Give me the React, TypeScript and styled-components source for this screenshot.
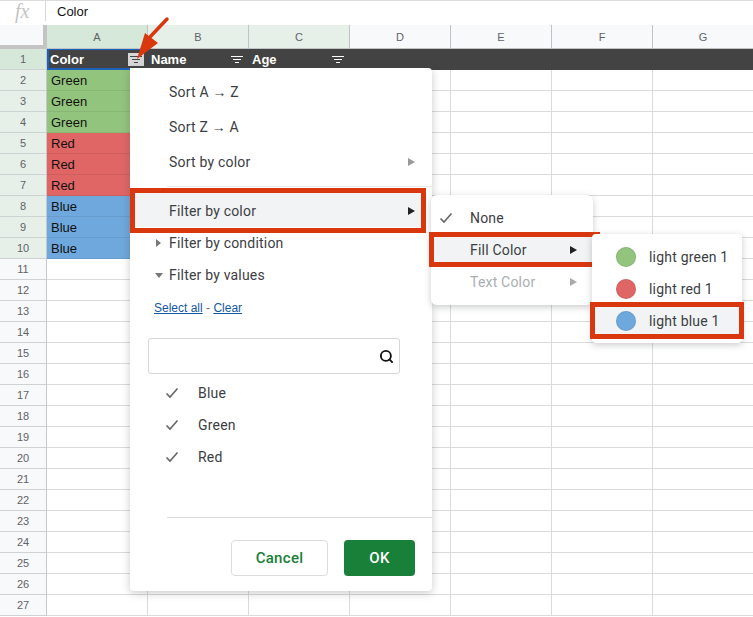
import styled, { createGlobalStyle } from "styled-components";
import { Search } from "lucide-react";

const rows = Array.from({ length: 27 }, (_, i) => i + 1);
const columns = ["A", "B", "C", "D", "E", "F", "G"];

const colors = {
  green: "#93c47d",
  red: "#e06666",
  blue: "#6fa8dc",
  line: "#dadada",
  mark: "#d9380f",
  text: "#3c4043",
};

const cellData: { label: string; fill: string }[] = [
  { label: "Green", fill: colors.green },
  { label: "Green", fill: colors.green },
  { label: "Green", fill: colors.green },
  { label: "Red", fill: colors.red },
  { label: "Red", fill: colors.red },
  { label: "Red", fill: colors.red },
  { label: "Blue", fill: colors.blue },
  { label: "Blue", fill: colors.blue },
  { label: "Blue", fill: colors.blue },
];

const GlobalStyle = createGlobalStyle`
  html, body {
    margin: 0;
    padding: 0;
    background: #fff;
    overflow: hidden;
  }
  body {
    font-family: "Liberation Sans", Arial, sans-serif;
  }
`;

const Page = styled.div`
  position: relative;
  width: 753px;
  height: 617px;
  overflow: hidden;
`;

const FormulaBar = styled.div`
  height: 25px;
  box-sizing: border-box;
  padding-bottom: 4px;
  display: flex;
  align-items: center;
  border-top: 1px solid #dcdcdc;
`;

const FxLabel = styled.span`
  width: 46px;
  box-sizing: border-box;
  padding-left: 15px;
  font-family: "Liberation Serif", serif;
  font-style: italic;
  font-size: 20px;
  line-height: 20px;
  color: #c4c4c4;
  border-right: 1px solid #d8d8d8;
`;

const FormulaText = styled.span`
  margin-left: 11px;
  font-size: 13px;
  color: #111;
`;

const Sheet = styled.div`
  display: grid;
  grid-template-columns: 47px repeat(7, 101px);
  grid-template-rows: 24px 21px;
  grid-auto-rows: 21px;
`;

const Corner = styled.div`
  background: #f8f9fa;
  border-right: 4px solid #c4c4c4;
  border-bottom: 4px solid #c4c4c4;
`;

const ColumnHead = styled.div<{ $tone: "active" | "used" | "plain" }>`
  display: flex;
  align-items: center;
  justify-content: center;
  font-size: 11px;
  color: #5f6368;
  border-right: 1px solid #bfc3c6;
  border-bottom: 1px solid #bfc3c6;
  background: ${(p) =>
    p.$tone === "active" ? "#d5e8da" : p.$tone === "used" ? "#e6efe8" : "#f8f9fa"};
`;

const RowHead = styled.div<{ $tone: "active" | "used" | "plain" }>`
  display: flex;
  align-items: center;
  justify-content: center;
  font-size: 11px;
  color: #5f6368;
  border-right: 1px solid #c4c8ca;
  border-bottom: 1px solid #cfd2d2;
  background: ${(p) =>
    p.$tone === "active" ? "#d5e8da" : p.$tone === "used" ? "#e6efe8" : "#f8f9fa"};
`;

const Cell = styled.div<{ $fill?: string }>`
  display: flex;
  align-items: center;
  box-sizing: border-box;
  padding-left: 4px;
  font-size: 13px;
  color: #111;
  background: ${(p) => p.$fill ?? "#fff"};
  border-right: 1px solid ${(p) => p.$fill ?? colors.line};
  border-bottom: 1px solid ${(p) => (p.$fill ? "rgba(0,0,0,0.07)" : colors.line)};
`;

const HeaderCell = styled.div<{ $selected?: boolean }>`
  display: flex;
  align-items: center;
  justify-content: space-between;
  box-sizing: border-box;
  padding: 0 4px 0 ${(p) => (p.$selected ? "1px" : "3px")};
  font-size: 13px;
  font-weight: 700;
  color: #fff;
  background: #434343;
  border: ${(p) => (p.$selected ? "2px solid #1c62b9" : "none")};
  border-right: none;
  border-top-width: ${(p) => (p.$selected ? "1px" : "0")};
`;

const FilterButton = styled.span<{ $active?: boolean }>`
  width: 16px;
  height: 13px;
  display: flex;
  align-items: center;
  justify-content: center;
  background: ${(p) => (p.$active ? "#d6d6d6" : "transparent")};
  color: ${(p) => (p.$active ? "#444" : "#fff")};
`;

const Menu = styled.div`
  position: absolute;
  left: 130px;
  top: 68px;
  width: 302px;
  height: 523px;
  display: flex;
  flex-direction: column;
  background: #fff;
  border-radius: 0 4px 4px 4px;
  box-shadow: 0 2px 8px rgba(60, 64, 67, 0.28);
  font-family: Roboto, sans-serif;
  font-size: 14px;
  letter-spacing: 0.2px;
  color: ${colors.text};
`;

const SortGroup = styled.div`
  padding-top: 6px;
  padding-bottom: 7px;
`;

const SortRow = styled.div`
  height: 35px;
  display: flex;
  align-items: center;
  justify-content: space-between;
  padding: 0 17px 0 39px;
`;

const SortRule = styled.div`
  margin-left: 37px;
  border-top: 1px solid #e8eaed;
`;

const MarkedRow = styled.div`
  position: relative;
  height: 34px;
  box-sizing: border-box;
  margin: 6px 6px 0 0;
  display: flex;
  align-items: center;
  justify-content: space-between;
  padding: 1px 11px 0 39px;
  background: #f1f3f4;
  color: #3c4043;
`;

const RedFrame = styled.span<{ $inset: string }>`
  position: absolute;
  inset: ${(p) => p.$inset};
  border: 5px solid ${colors.mark};
  pointer-events: none;
`;

const Arrow = styled.span<{ $color?: string }>`
  width: 0;
  height: 0;
  border-left: 7px solid ${(p) => p.$color ?? "#222"};
  border-top: 4px solid transparent;
  border-bottom: 4px solid transparent;
`;

const ToggleRow = styled.div`
  height: 32px;
  display: flex;
  align-items: center;
  padding-left: 26px;
  gap: 8px;
`;

const CaretRight = styled.span`
  width: 0;
  height: 0;
  border-left: 5px solid #777;
  border-top: 4px solid transparent;
  border-bottom: 4px solid transparent;
`;

const CaretDown = styled.span`
  width: 0;
  height: 0;
  margin: 0 -2px 0 -1px;
  border-top: 5px solid #777;
  border-left: 4px solid transparent;
  border-right: 4px solid transparent;
`;

const Links = styled.div`
  margin: 10px 0 0 24px;
  font-family: "Liberation Sans", sans-serif;
  font-size: 12px;
  line-height: 14px;
  letter-spacing: 0;
  color: #5f6368;
`;

const TextLink = styled.a`
  color: #15589f;
  text-decoration: underline;
`;

const SearchBox = styled.div`
  margin: 23px 0 0 18px;
  width: 252px;
  height: 36px;
  box-sizing: border-box;
  display: flex;
  align-items: center;
  justify-content: flex-end;
  padding-right: 5px;
  border: 1px solid #d4d6d8;
  border-radius: 3px;
  color: #111;
`;

const ValueList = styled.div`
  margin-top: 3px;
  display: flex;
  flex-direction: column;
`;

const ValueRow = styled.div`
  height: 32px;
  display: flex;
  align-items: center;
  padding-left: 35px;
  gap: 19px;
`;

const FooterLine = styled.div`
  margin: 44px 0 0 37px;
  border-top: 1px solid #dadce0;
`;

const Footer = styled.div`
  margin-top: 22px;
  padding-right: 17px;
  display: flex;
  justify-content: flex-end;
  gap: 16px;
`;

const CancelButton = styled.button`
  width: 97px;
  height: 36px;
  background: #fff;
  border: 1px solid #dadce0;
  border-radius: 4px;
  font-family: Roboto, sans-serif;
  font-size: 15px;
  font-weight: 500;
  letter-spacing: 0.3px;
  color: #188038;
`;

const OkButton = styled.button`
  width: 71px;
  height: 36px;
  background: #188038;
  border: none;
  border-radius: 4px;
  font-family: Roboto, sans-serif;
  font-size: 15px;
  font-weight: 500;
  letter-spacing: 0.3px;
  color: #fff;
`;

const SubMenu = styled.div`
  position: absolute;
  left: 431px;
  top: 195px;
  width: 162px;
  height: 110px;
  box-sizing: border-box;
  padding-top: 7px;
  background: #fff;
  border-radius: 6px;
  box-shadow: 0 2px 7px rgba(60, 64, 67, 0.28);
  font-family: Roboto, sans-serif;
  font-size: 14px;
  letter-spacing: 0.2px;
  color: ${colors.text};
`;

const SubRow = styled.div<{ $muted?: boolean; $active?: boolean }>`
  position: relative;
  height: 32px;
  display: flex;
  align-items: center;
  padding: 0 16px 0 8px;
  background: ${(p) => (p.$active ? "#f1f3f4" : "transparent")};
  color: ${(p) => (p.$muted ? "#aaaeb2" : "inherit")};
`;

const CheckSlot = styled.span`
  width: 31px;
  display: flex;
  align-items: center;
`;

const Grow = styled.span`
  flex: 1;
`;

const ColorMenu = styled(SubMenu)`
  left: 592px;
  top: 234px;
  width: 150px;
  height: 109px;
  border-radius: 4px;
`;

const ColorRow = styled.div<{ $active?: boolean }>`
  position: relative;
  height: 32px;
  display: flex;
  align-items: center;
  gap: 13px;
  padding-left: 24px;
  background: ${(p) => (p.$active ? "#f1f3f4" : "transparent")};
`;

const Swatch = styled.span<{ $fill: string }>`
  width: 20px;
  height: 20px;
  border-radius: 50%;
  background: ${(p) => p.$fill};
  box-shadow: inset 0 0 0 1px rgba(0, 0, 0, 0.08);
`;

const Pointer = styled.svg`
  position: absolute;
  left: 130px;
  top: 14px;
  width: 42px;
  height: 50px;
`;

function FilterIcon() {
  return (
    <svg width="12" height="9" viewBox="0 0 12 9" fill="none" stroke="currentColor" strokeWidth="1">
      <path d="M0 1.5h12M2 4.5h8M4 7.5h4" />
    </svg>
  );
}

function CheckIcon() {
  return (
    <svg width="14" height="12" viewBox="0 0 14 12" fill="none" stroke="#666" strokeWidth="1.6">
      <path d="M1.5 6.5l3.5 3.6L12.5 1.5" />
    </svg>
  );
}

function headerTone(col: string): "active" | "used" | "plain" {
  if (col === "A") return "active";
  return col === "B" || col === "C" ? "used" : "plain";
}

function rowTone(row: number): "active" | "used" | "plain" {
  if (row === 1) return "active";
  return row <= 10 ? "used" : "plain";
}

export default function App() {
  return (
    <Page>
      <GlobalStyle />
      <FormulaBar>
        <FxLabel>fx</FxLabel>
        <FormulaText>Color</FormulaText>
      </FormulaBar>
      <Sheet>
        <Corner />
        {columns.map((col) => (
          <ColumnHead key={col} $tone={headerTone(col)}>
            {col}
          </ColumnHead>
        ))}
        {rows.map((row) => (
          <Row key={row} row={row} />
        ))}
      </Sheet>

      <Menu>
        <SortGroup>
          <SortRow>Sort A → Z</SortRow>
          <SortRow>Sort Z → A</SortRow>
          <SortRow>
            Sort by color
            <Arrow $color="#999" />
          </SortRow>
        </SortGroup>
        <SortRule />
        <MarkedRow>
          Filter by color
          <Arrow />
          <RedFrame $inset="-5px 0 -6px 0" />
        </MarkedRow>
        <ToggleRow>
          <CaretRight />
          Filter by condition
        </ToggleRow>
        <ToggleRow>
          <CaretDown />
          Filter by values
        </ToggleRow>
        <Links>
          <TextLink>Select all</TextLink> - <TextLink>Clear</TextLink>
        </Links>
        <SearchBox>
          <Search size={15} strokeWidth={3} />
        </SearchBox>
        <ValueList>
          {["Blue", "Green", "Red"].map((v) => (
            <ValueRow key={v}>
              <CheckIcon />
              {v}
            </ValueRow>
          ))}
        </ValueList>
        <FooterLine />
        <Footer>
          <CancelButton>Cancel</CancelButton>
          <OkButton>OK</OkButton>
        </Footer>
      </Menu>

      <SubMenu>
        <SubRow>
          <CheckSlot>
            <CheckIcon />
          </CheckSlot>
          None
        </SubRow>
        <SubRow $active>
          <CheckSlot />
          <Grow>Fill Color</Grow>
          <Arrow />
          <RedFrame $inset="-2px -7px -1px -2px" />
        </SubRow>
        <SubRow $muted>
          <CheckSlot />
          <Grow>Text Color</Grow>
          <Arrow $color="#aaa" />
        </SubRow>
      </SubMenu>

      <ColorMenu>
        <ColorRow>
          <Swatch $fill={colors.green} />
          light green 1
        </ColorRow>
        <ColorRow>
          <Swatch $fill={colors.red} />
          light red 1
        </ColorRow>
        <ColorRow $active>
          <Swatch $fill={colors.blue} />
          light blue 1
          <RedFrame $inset="-3px -2px -2px -2px" />
        </ColorRow>
      </ColorMenu>

      <Pointer viewBox="0 0 42 50">
        <path d="M37 5L20 23" stroke={colors.mark} strokeWidth="3.5" strokeLinecap="round" />
        <path d="M7 45L15 19L28 29Z" fill={colors.mark} />
      </Pointer>
    </Page>
  );
}

function Row({ row }: { row: number }) {
  const data = row >= 2 && row <= 10 ? cellData[row - 2] : null;
  return (
    <>
      <RowHead $tone={rowTone(row)}>{row}</RowHead>
      {columns.map((col, i) => {
        if (row === 1) {
          const label = ["Color", "Name", "Age"][i];
          return (
            <HeaderCell key={col} $selected={i === 0}>
              {label}
              {label && (
                <FilterButton $active={i === 0}>
                  <FilterIcon />
                </FilterButton>
              )}
            </HeaderCell>
          );
        }
        if (i === 0 && data) {
          return (
            <Cell key={col} $fill={data.fill}>
              {data.label}
            </Cell>
          );
        }
        return <Cell key={col} />;
      })}
    </>
  );
}
